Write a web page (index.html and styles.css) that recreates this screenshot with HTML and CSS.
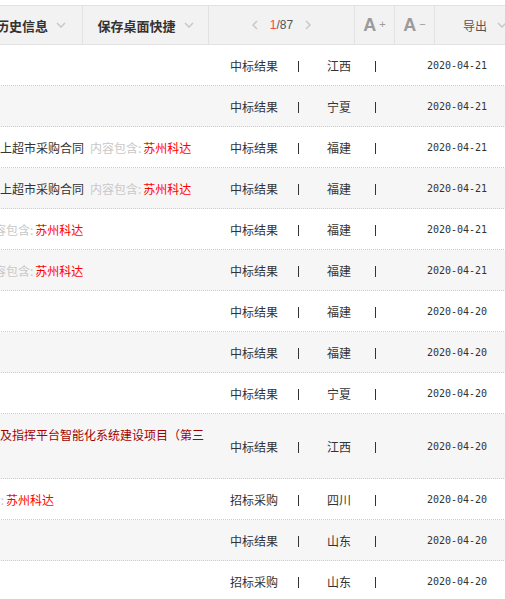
FILE: index.html
```html
<!DOCTYPE html>
<html lang="zh-CN">
<head>
    <meta charset="UTF-8">
    <meta name="viewport" content="width=device-width, initial-scale=1.0">
    <title>招标信息列表</title>
    <link rel="stylesheet" href="styles.css">
</head>
<body>

    <div class="list">
        <div class="head">
            <div class="hcell hcell-first">历史信息 <svg class="chev" width="10" height="6" viewBox="0 0 10 6"><polyline points="1,1 5,5 9,1"/></svg></div>
            <div class="hcell hcell-save">保存桌面快捷 <svg class="chev" width="10" height="6" viewBox="0 0 10 6"><polyline points="1,1 5,5 9,1"/></svg></div>
            <div class="hcell hcell-pager">
                <svg class="arrow" width="6" height="10" viewBox="0 0 6 10"><polyline points="5,1 1,5 5,9"/></svg>
                <span class="pages"><span class="cur">1</span>/87</span>
                <svg class="arrow" width="6" height="10" viewBox="0 0 6 10"><polyline points="1,1 5,5 1,9"/></svg>
            </div>
            <div class="hcell hcell-font">A<span class="sign">+</span></div>
            <div class="hcell hcell-font">A<span class="sign">−</span></div>
            <div class="hcell hcell-export">导出 <svg class="chev" width="10" height="6" viewBox="0 0 10 6"><polyline points="1,1 5,5 9,1"/></svg></div>
        </div>

        <div class="row">
            <div class="title"><span class="name">江西省赣州市公安局视频会议系统采购项目中标公告</span><span class="hint">内容包含:</span><span class="hit">苏州科达</span></div>
            <div class="type">中标结果</div><i class="sep"></i><div class="area">江西</div><i class="sep"></i><div class="date">2020-04-21</div>
        </div>
        <div class="row">
            <div class="title"><span class="name">宁夏回族自治区公安厅视频会议终端采购项目</span><span class="hint">内容包含:</span><span class="hit">苏州科达</span></div>
            <div class="type">中标结果</div><i class="sep"></i><div class="area">宁夏</div><i class="sep"></i><div class="date">2020-04-21</div>
        </div>
        <div class="row">
            <div class="title"><span class="name">福建省政府采购网福州市公安局交警支队指挥中心视频会议终端配套设备网上超市采购合同</span><span class="hint">内容包含:</span><span class="hit">苏州科达</span></div>
            <div class="type">中标结果</div><i class="sep"></i><div class="area">福建</div><i class="sep"></i><div class="date">2020-04-21</div>
        </div>
        <div class="row">
            <div class="title"><span class="name">福建省政府采购网厦门市公安局交警支队指挥中心视频会议终端配套设备网上超市采购合同</span><span class="hint">内容包含:</span><span class="hit">苏州科达</span></div>
            <div class="type">中标结果</div><i class="sep"></i><div class="area">福建</div><i class="sep"></i><div class="date">2020-04-21</div>
        </div>
        <div class="row">
            <div class="title"><span class="name">福建省政府采购网漳州公安局视频会议系统扩容项目网上超市采购合同</span><span class="hint">内容包含:</span><span class="hit">苏州科达</span></div>
            <div class="type">中标结果</div><i class="sep"></i><div class="area">福建</div><i class="sep"></i><div class="date">2020-04-21</div>
        </div>
        <div class="row">
            <div class="title"><span class="name">福建省政府采购网龙岩公安局视频会议系统扩容项目网上超市采购合同</span><span class="hint">内容包含:</span><span class="hit">苏州科达</span></div>
            <div class="type">中标结果</div><i class="sep"></i><div class="area">福建</div><i class="sep"></i><div class="date">2020-04-21</div>
        </div>
        <div class="row">
            <div class="title"><span class="name">福建省三明市公安局视频会议系统建设项目</span><span class="hint">内容包含:</span><span class="hit">苏州科达</span></div>
            <div class="type">中标结果</div><i class="sep"></i><div class="area">福建</div><i class="sep"></i><div class="date">2020-04-20</div>
        </div>
        <div class="row">
            <div class="title"><span class="name">福建省莆田市公安局视频会议扩容项目</span><span class="hint">内容包含:</span><span class="hit">苏州科达</span></div>
            <div class="type">中标结果</div><i class="sep"></i><div class="area">福建</div><i class="sep"></i><div class="date">2020-04-20</div>
        </div>
        <div class="row">
            <div class="title"><span class="name">宁夏银川市公安局视频会议系统采购</span><span class="hint">内容包含:</span><span class="hit">苏州科达</span></div>
            <div class="type">中标结果</div><i class="sep"></i><div class="area">宁夏</div><i class="sep"></i><div class="date">2020-04-20</div>
        </div>
        <div class="row">
            <div class="title visited"><span class="name">江西省南昌市公安局公共安全视频监控建设联网应用工程视频会议系统升级及指挥平台智能化系统建设项目（第三包）中标公告</span></div>
            <div class="type">中标结果</div><i class="sep"></i><div class="area">江西</div><i class="sep"></i><div class="date">2020-04-20</div>
        </div>
        <div class="row">
            <div class="title"><span class="name">四川省公安厅高清视频会议系统建设项目第3包视频会议终端采购</span><span class="hint">内容包含:</span><span class="hit">苏州科达</span></div>
            <div class="type">招标采购</div><i class="sep"></i><div class="area">四川</div><i class="sep"></i><div class="date">2020-04-20</div>
        </div>
        <div class="row">
            <div class="title"><span class="name">山东省济南市公安局视频会议终端采购项目</span><span class="hint">内容包含:</span><span class="hit">苏州科达</span></div>
            <div class="type">中标结果</div><i class="sep"></i><div class="area">山东</div><i class="sep"></i><div class="date">2020-04-20</div>
        </div>
        <div class="row">
            <div class="title"><span class="name">山东省青岛市公安局视频会议系统招标公告</span><span class="hint">内容包含:</span><span class="hit">苏州科达</span></div>
            <div class="type">招标采购</div><i class="sep"></i><div class="area">山东</div><i class="sep"></i><div class="date">2020-04-20</div>
        </div>
    </div>

</body>
</html>
```

FILE: styles.css
```css
html, body {
    margin: 0;
    padding: 0;
    overflow: hidden;
    background-color: white;
}
body {
    font-family: "Noto Sans CJK SC", sans-serif;
    font-size: 12px;
    color: #333;
}
/* the list is wider than the window, only its right part shows */
.list {
    width: 938px;
    margin-left: -400px;
}
.head {
    display: flex;
    height: 40px;
    margin-top: 5px;
    background-color: #f2f2f2;
    border-top: 1px solid #e2e2e2;
    border-bottom: 1px solid #e2e2e2;
    box-sizing: border-box;
}
.hcell {
    display: flex;
    align-items: center;
    justify-content: center;
    box-sizing: border-box;
    border-right: 1px solid #e2e2e2;
    flex: none;
}
.hcell-first,
.hcell-save {
    font-size: 13px;
    font-weight: bold;
    color: #333;
    gap: 8px;
}
.hcell-first {
    width: 483px;
    justify-content: flex-end;
    padding-right: 16px;
}
.hcell-save {
    width: 126px;
}
.chev polyline,
.arrow polyline {
    fill: none;
    stroke: #c8c8c8;
    stroke-width: 1.5;
}
.hcell-pager {
    width: 146px;
    gap: 12px;
}
.pages {
    font-family: "Liberation Sans", Arial, sans-serif;
    font-size: 12px;
    color: #555;
}
.pages .cur {
    color: #f44;
}
.hcell-font {
    width: 40px;
    font-family: "Liberation Sans", Arial, sans-serif;
    font-size: 18px;
    font-weight: bold;
    color: #9a9a9a;
}
.hcell-font .sign {
    font-size: 11px;
    font-weight: normal;
    margin-left: 3px;
    margin-bottom: 2px;
}
.hcell-export {
    flex: 1;
    justify-content: flex-start;
    padding-left: 28px;
    gap: 10px;
    font-size: 12px;
    color: #555;
    border-right: none;
}
.row {
    display: flex;
    align-items: center;
    padding: 9px 0 7px;
    line-height: 24px;
    border-bottom: 1px dotted #ccc;
}
.row:nth-child(odd) {
    background-color: #f6f6f6;
}
.title {
    width: 612px;
    flex: none;
    box-sizing: border-box;
    padding: 0 4px;
}
.title.visited {
    color: #a50000;
}
.hint {
    color: #c8c8c8;
    margin-left: 6px;
}
.hit {
    color: #f00;
    margin-left: 2px;
}
.type {
    width: 84px;
    flex: none;
    text-align: center;
}
.sep {
    width: 1px;
    height: 11px;
    background-color: #333;
    margin: 0 2px;
    flex: none;
}
.area {
    width: 72px;
    flex: none;
    box-sizing: border-box;
    padding-left: 4px;
    text-align: center;
}
.date {
    width: 158px;
    flex: none;
    text-align: center;
    font-family: "DejaVu Sans Mono", monospace;
    font-size: 10px;
}
```
